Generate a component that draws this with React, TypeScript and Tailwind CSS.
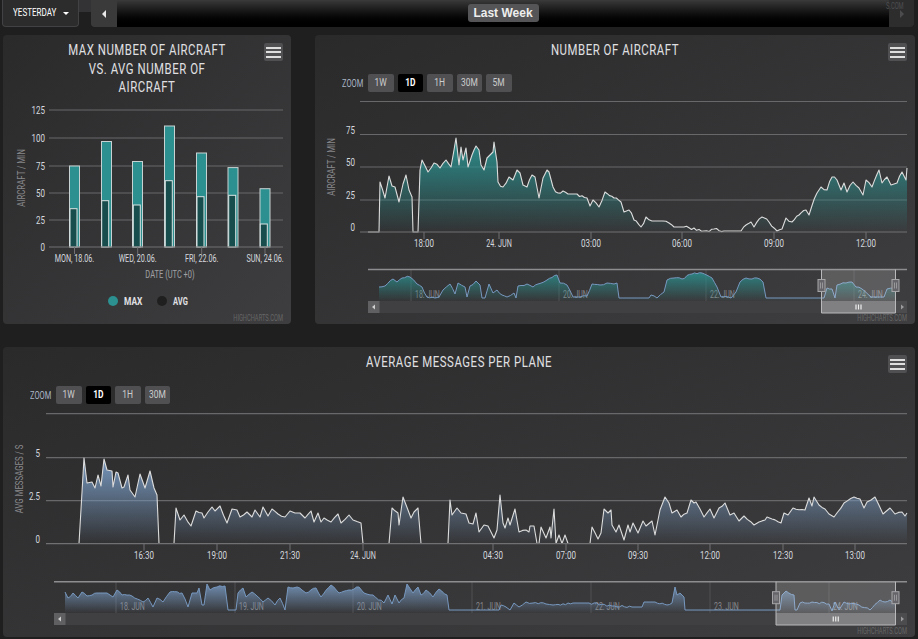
import type { ReactNode } from 'react'

const unica = "font-['Roboto',sans-serif] uppercase"
const titleClass =
  "font-['Roboto',sans-serif] text-[15px] leading-[18.5px] tracking-[0.7px] uppercase text-[#e0e0e3] text-center scale-x-[0.76]"

type Pts = number[]

// wiggle long segments a bit so the series reads like real samples
function jag(flat: Pts, amp: number, step: number, seed: number) {
  const out: string[] = []
  let n = seed
  for (let i = 0; i < flat.length; i += 2) {
    const x = flat[i]
    const y = flat[i + 1]
    out.push(`${x},${y}`)
    if (i + 2 >= flat.length) break
    const nx = flat[i + 2]
    const ny = flat[i + 3]
    if (ny === y || nx - x < step * 1.5) continue
    const parts = Math.floor((nx - x) / step)
    for (let k = 1; k < parts; k++) {
      n += 1
      const r = Math.sin(n * 12.9898) * 43758.5453
      const noise = (r - Math.floor(r) - 0.5) * 2 * amp
      out.push(`${(x + ((nx - x) * k) / parts).toFixed(1)},${(y + ((ny - y) * k) / parts + noise).toFixed(1)}`)
    }
  }
  return out.join(' ')
}

const aircraftLine: Pts = [
  368,232, 379,232, 380,182, 385,198, 389,176, 392,186, 395,187, 399,202, 403,184, 406,175, 409,190, 412,197, 413,232, 418,232,
  420,170, 422,160, 428,172, 434,163, 440,168, 446,160, 451,167, 454,150, 456,138, 459,165, 461,147, 463,160, 466,148, 468,167,
  472,155, 474,150, 476,146, 479,150, 481,165, 484,170, 487,158, 490,155, 493,152, 494,142, 497,162, 498,182, 503,187, 509,177,
  513,180, 517,170, 520,173, 523,185, 527,187, 532,175, 535,177, 539,198, 543,178, 547,170, 549,172, 553,187, 558,193, 563,191,
  568,194, 577,194, 587,198, 590,206, 593,200, 599,207, 605,192, 614,198, 621,202, 624,212, 629,210, 634,220, 641,227, 646,217,
  652,221, 657,221, 663,221, 669,223, 674,227, 684,227, 694,228, 704,231, 714,229, 724,231, 741,231, 746,225, 751,222, 754,227,
  762,217, 769,222, 777,231, 782,229, 786,218, 792,222, 799,215, 806,210, 809,215, 817,193, 821,187, 827,190, 832,177, 837,180,
  841,190, 844,183, 847,192, 853,182, 859,188, 863,195, 866,180, 872,187, 879,170, 882,183, 887,177, 891,185, 897,183, 902,172,
  906,180, 907,168,
]

const aircraftNav: Pts = [
  379,287, 385,286, 393,279, 397,282, 402,278, 410,277, 417,284, 422,287, 427,297, 435,298, 439,297, 443,290, 450,284, 455,294,
  458,283, 465,287, 467,297, 470,286, 476,281, 480,285, 482,298, 485,298, 489,284, 493,293, 497,290, 502,295, 507,297, 514,293,
  516,298, 518,286, 527,284, 533,287, 538,284, 547,280, 557,275, 560,283, 567,285, 573,297, 580,297, 587,296, 592,284, 600,285,
  607,283, 614,284, 617,283, 619,298, 649,298, 651,295, 657,298, 664,292, 667,280, 674,278, 682,279, 692,274, 702,273, 712,278,
  717,287, 721,297, 731,298, 736,292, 740,282, 746,278, 752,279, 757,278, 763,282, 766,298, 824,298, 827,288, 832,289, 835,298,
  837,285, 846,283, 852,282, 856,287, 862,289, 871,297, 884,297, 887,289, 894,288, 896,287,
]

const messagesLine: Pts = [
  54,543.5, 79,543.5, 84,458, 87,483, 92,482, 95,488, 98,475, 101,486, 104,459, 107,470, 112,471, 113,487, 116,472, 118,473,
  122,488, 124,487, 128,475, 130,490, 135,497, 140,474, 145,488, 150,471, 154,488, 157,495, 159,543.5, 174,543.5, 176,508, 180,520,
  184,515, 191,526, 196,511, 202,513, 204,518, 212,507, 215,511, 220,506, 227,523, 232,509, 237,510, 240,517, 247,512, 252,517,
  255,510, 260,517, 263,507, 268,516, 272,509, 278,514, 285,517, 290,511, 295,513, 300,513, 305,518, 311,511, 314,522, 318,513,
  321,522, 324,518, 331,522, 338,514, 341,523, 349,515, 353,520, 361,523, 363,543.5, 389,543.5, 392,508, 398,513, 399,525, 403,497,
  408,510, 411,518, 414,512, 418,508, 421,543.5, 448,543.5, 450,500, 452,515, 457,508, 461,513, 466,514, 469,523, 473,524, 476,513,
  479,532, 484,525, 488,526, 494,538, 497,530, 500,495, 503,523, 505,528, 508,518, 510,525, 515,509, 519,532, 526,530, 529,532,
  530,526, 534,526, 537,543.5, 539,543.5, 541,527, 546,538, 550,527, 551,538, 554,509, 556,543.5, 559,535, 562,543.5, 565,535, 568,543.5,
  590,543.5, 592,527, 598,539, 601,533, 604,509, 608,513, 611,510, 612,525, 616,532, 619,525, 624,540, 628,525, 630,532, 633,523,
  638,533, 643,521, 646,526, 652,521, 655,535, 660,510, 665,497, 669,503, 672,513, 677,510, 681,517, 687,513, 691,500, 694,503,
  696,502, 704,517, 710,509, 714,518, 719,508, 725,503, 730,515, 734,513, 739,521, 744,516, 754,525, 759,522, 765,520, 767,517,
  772,519, 781,523, 784,513, 788,515, 793,508, 805,510, 809,498, 812,506, 814,497, 819,505, 825,509, 829,514, 834,517, 844,503,
  854,497, 860,499, 864,508, 867,502, 875,497, 883,514, 890,508, 895,514, 902,512, 905,516, 907,513,
]

const messagesNav: Pts = [
  65,592, 68,598, 73,593, 78,598, 82,592, 87,596, 97,593, 107,593, 113,597, 117,590, 122,595, 132,596, 143,602, 148,598, 153,607,
  157,598, 163,602, 170,592, 182,593, 188,607, 192,593, 197,593, 199,588, 202,605, 204,605, 207,584, 210,590, 217,587, 225,586,
  228,610, 236,610, 238,593, 243,588, 246,597, 252,592, 257,596, 263,602, 268,598, 275,605, 280,598, 285,610, 288,587, 293,588,
  297,587, 302,590, 306,593, 316,588, 321,597, 331,585, 339,593, 349,590, 359,587, 364,593, 373,595, 384,603, 388,595, 392,604,
  395,595, 399,603, 404,598, 407,584, 413,593, 418,587, 421,595, 426,590, 433,597, 439,589, 447,595, 449,610, 499,610, 501,605,
  506,607, 510,610, 514,603, 519,607, 526,602, 533,603, 546,604, 553,605, 573,603, 589,603, 612,606, 632,607, 642,607, 644,602,
  655,602, 667,605, 672,603, 675,587, 677,595, 680,593, 684,597, 685,610, 780,610, 782,595, 786,591, 794,595, 795,610, 797,610,
  800,603, 812,602, 829,604, 832,611, 835,602, 839,610, 844,602, 859,605, 870,610, 880,600, 885,602, 890,600, 895,604,
]

// Squeezes Roboto horizontally, the chart font is a lot narrower
function Label({
  x,
  y,
  k = 0.8,
  anchor = 'middle',
  rotate = false,
  className,
  children,
}: {
  x: number
  y: number
  k?: number
  anchor?: 'start' | 'middle' | 'end'
  rotate?: boolean
  className: string
  children: ReactNode
}) {
  return (
    <text
      transform={`translate(${x} ${y})${rotate ? ' rotate(-90)' : ''} scale(${k} 1)`}
      textAnchor={anchor}
      className={`${unica} ${className}`}
    >
      {children}
    </text>
  )
}

function Hamburger() {
  return (
    <div className="absolute top-[8px] right-[8px] w-[19px] h-[18px] rounded-[2px] bg-[#505053] flex flex-col items-center justify-center gap-[2.5px]">
      <span className="block w-[15px] h-[2px] bg-[#dedede]" />
      <span className="block w-[15px] h-[2px] bg-[#dedede]" />
      <span className="block w-[15px] h-[2px] bg-[#dedede]" />
    </div>
  )
}

function ZoomRow({ labels }: { labels: string[] }) {
  return (
    <div className="flex items-center h-[18px] pl-[27px]">
      <span className={`${unica} w-[21px] mr-[5px] text-[10px] text-[#a9b4c4] whitespace-nowrap origin-left scale-x-[0.75]`}>Zoom</span>
      <div className="flex gap-[4px]">
        {labels.map((label) => (
          <div
            key={label}
            className={`w-[25.5px] h-[18px] rounded-[2px] flex items-center justify-center ${
              label === '1D' ? 'bg-black text-white font-bold' : 'bg-[#505053] text-[#cccccc]'
            }`}
          >
            <span className={`${unica} text-[10.5px] scale-x-[0.8]`}>{label}</span>
          </div>
        ))}
      </div>
    </div>
  )
}

function Grid({ x1, x2, ys }: { x1: number; x2: number; ys: number[] }) {
  return (
    <>
      {ys.map((y) => (
        <line key={y} x1={x1} x2={x2} y1={y} y2={y} stroke="#68686b" strokeWidth={1.2} />
      ))}
    </>
  )
}

function AxisY({ x, labels }: { x: number; labels: [string, number][] }) {
  return (
    <>
      {labels.map(([t, y]) => (
        <Label key={t} x={x} y={y} anchor="end" className="text-[10px] fill-[#d5d8de]">
          {t}
        </Label>
      ))}
    </>
  )
}

function AxisX({ ticks, y0, labelY }: { ticks: [string, number][]; y0: number; labelY: number }) {
  return (
    <>
      {ticks.map(([t, x]) => (
        <g key={t}>
          <line x1={x} x2={x} y1={y0} y2={y0 + 7} stroke="#707073" />
          <Label x={x} y={labelY} k={/[a-z]/i.test(t) ? 0.72 : 0.8} className="text-[10px] fill-[#d5d8de]">
            {t}
          </Label>
        </g>
      ))}
    </>
  )
}

function Navigator({
  left,
  right,
  top,
  plotBottom,
  selFrom,
  days,
  line,
  areaStart,
  gradient,
  seed,
}: {
  left: number
  right: number
  top: number
  plotBottom: number
  selFrom: number
  days: [string, number][]
  line: Pts
  areaStart: number
  gradient: string
  seed: number
}) {
  const pts = jag(line, 1, 2.4, seed)
  const lastX = line[line.length - 2]
  const barBottom = plotBottom + 12
  const selTo = right - 11.5
  const thumb = (selFrom + selTo) / 2
  const midY = top + 16
  return (
    <g>
      {days.map(([t, x]) => (
        <g key={t}>
          <line x1={x} x2={x} y1={top} y2={plotBottom} stroke="#505053" />
          <Label x={x + 4} y={plotBottom - 3.5} k={0.7} anchor="start" className="text-[10px] fill-[#88888b]">
            {t}
          </Label>
        </g>
      ))}
      <polygon points={`${areaStart},${plotBottom} ${pts} ${lastX},${plotBottom}`} fill={gradient} />
      <polyline points={pts} fill="none" stroke="#7798bf" strokeWidth={1} />
      <line x1={left} x2={right} y1={top} y2={top} stroke="#8d8d90" strokeWidth={1.4} />
      <rect x={left} y={plotBottom} width={right - left} height={12} fill="#404043" />
      <rect x={left} y={plotBottom} width={11.5} height={12} fill="#606063" />
      <path d={`M${left + 7} ${plotBottom + 3.5}v5l-3 -2.5z`} fill="#cfcfcf" />
      <rect x={right - 11} y={plotBottom} width={11} height={12} fill="#4c4c4f" />
      <path d={`M${right - 6} ${plotBottom + 3.5}v5l3 -2.5z`} fill="#9a9a9d" />
      <rect x={selFrom} y={top} width={selTo - selFrom} height={barBottom - top} fill="#ffffff" fillOpacity={0.17} />
      <rect x={selFrom} y={plotBottom} width={selTo - selFrom} height={12} fill="#808083" />
      <path d={`M${selFrom} ${top}V${barBottom}H${selTo}V${top}`} fill="none" stroke="#b9b9bb" strokeWidth={1} />
      {[selFrom, selTo].map((x) => (
        <g key={x}>
          <rect x={x - 3.5} y={midY - 6} width={7} height={12} fill="#66666a" stroke="#a5a5a8" />
          <path d={`M${x - 1} ${midY - 3}v6M${x + 1} ${midY - 3}v6`} stroke="#a5a5a8" strokeWidth={0.8} />
        </g>
      ))}
      <path
        d={`M${thumb - 2.5} ${plotBottom + 3.5}v5M${thumb} ${plotBottom + 3.5}v5M${thumb + 2.5} ${plotBottom + 3.5}v5`}
        stroke="#efefef"
        strokeWidth={1.2}
      />
    </g>
  )
}

function Credits({ x, y }: { x: number; y: number }) {
  return (
    <Label x={x} y={y} k={0.64} anchor="end" className="text-[9px] fill-[#666666]">
      Highcharts.com
    </Label>
  )
}

const bars = [
  [69.5, 166, 70, 208.7],
  [101.5, 141.5, 101.7, 200.7],
  [132.5, 161.5, 133.3, 205],
  [164.5, 126, 165.3, 180.7],
  [196.5, 153, 197, 196.7],
  [228, 167.6, 228.7, 195.3],
  [260, 188.7, 260.3, 224],
]

function ColumnChart() {
  return (
    <svg viewBox="3 98 288 226" className="block w-[288px] h-[226px]">
      <Grid x1={49} x2={283} ys={[110, 138, 166, 193, 220]} />
      <AxisY x={45} labels={[['125', 114], ['100', 142], ['75', 170], ['50', 197], ['25', 224], ['0', 251]]} />
      <Label x={25} y={178} k={0.68} rotate className="text-[11.5px] fill-[#88888b]">
        aircraft / min
      </Label>
      {bars.map(([mx, my, ax, ay]) => (
        <g key={mx}>
          <rect x={mx} y={my} width={10} height={247 - my} fill="#2b908f" stroke="#c9d2d2" />
          <rect x={ax} y={ay} width={7} height={247 - ay} fill="#174d4c" stroke="#dce4e4" />
        </g>
      ))}
      <line x1={49} x2={283} y1={247} y2={247} stroke="#707073" strokeWidth={1.2} />
      <AxisX
        ticks={[['Mon, 18.06.', 74.5], ['Wed, 20.06.', 137.7], ['Fri, 22.06.', 201.7], ['Sun, 24.06.', 265]]}
        y0={247}
        labelY={262}
      />
      <Label x={170} y={278} k={0.68} className="text-[11px] fill-[#a0a0a3]">
        Date (UTC +0)
      </Label>
      <circle cx={113} cy={301} r={5} fill="#2b908f" />
      <Label x={124} y={305} k={0.8} anchor="start" className="text-[10.5px] font-bold fill-[#e0e0e3]">
        Max
      </Label>
      <circle cx={162} cy={301} r={5} fill="#1f1f1f" />
      <Label x={173} y={305} k={0.72} anchor="start" className="text-[10.5px] font-bold fill-[#e0e0e3]">
        AVG
      </Label>
      <Credits x={283} y={321} />
    </svg>
  )
}

function AircraftChart() {
  const pts = jag(aircraftLine, 1.8, 2.2, 3)
  return (
    <svg viewBox="315 96 600 228" className="block w-[600px] h-[228px]">
      <defs>
        <linearGradient id="tealMain" x1="0" y1="0" x2="0" y2="1">
          <stop offset="0" stopColor="#2b908f" />
          <stop offset="1" stopColor="#2b908f" stopOpacity={0} />
        </linearGradient>
        <linearGradient id="tealNav" x1="0" y1="0" x2="0" y2="1">
          <stop offset="0" stopColor="#2b908f" stopOpacity={0.85} />
          <stop offset="1" stopColor="#2b908f" stopOpacity={0} />
        </linearGradient>
      </defs>
      <Grid x1={360} x2={907} ys={[101.5, 134.5, 167, 200]} />
      <AxisY x={355} labels={[['75', 133.5], ['50', 166], ['25', 199], ['0', 231]]} />
      <Label x={335} y={167} k={0.68} rotate className="text-[11.5px] fill-[#88888b]">
        aircraft / min
      </Label>
      <polygon points={`368,232 ${pts} 907,232`} fill="url(#tealMain)" />
      <polyline points={pts} fill="none" stroke="#dcdcdc" strokeWidth={1.1} strokeLinejoin="round" />
      <line x1={360} x2={907} y1={232} y2={232} stroke="#707073" strokeWidth={1.2} />
      <AxisX
        ticks={[['18:00', 424], ['24. Jun', 499], ['03:00', 591], ['06:00', 682], ['09:00', 774], ['12:00', 866]]}
        y0={232}
        labelY={247}
      />
      <Navigator
        left={368}
        right={907}
        top={269.5}
        plotBottom={301}
        selFrom={821.5}
        days={[['18. Jun', 411], ['20. Jun', 559], ['22. Jun', 706], ['24. Jun', 854]]}
        line={aircraftNav}
        areaStart={379}
        gradient="url(#tealNav)"
        seed={21}
      />
      <Credits x={907} y={321} />
    </svg>
  )
}

function MessagesChart() {
  const pts = jag(messagesLine, 0.8, 3, 9)
  return (
    <svg viewBox="3 408 912 229" className="block w-[912px] h-[229px]">
      <defs>
        <linearGradient id="blueMain" x1="0" y1="0" x2="0" y2="1">
          <stop offset="0" stopColor="#7798bf" />
          <stop offset="1" stopColor="#7798bf" stopOpacity={0} />
        </linearGradient>
        <linearGradient id="blueNav" x1="0" y1="0" x2="0" y2="1">
          <stop offset="0" stopColor="#7798bf" stopOpacity={0.9} />
          <stop offset="1" stopColor="#7798bf" stopOpacity={0} />
        </linearGradient>
      </defs>
      <Grid x1={46} x2={907} ys={[413.7, 457.7, 500.7]} />
      <AxisY x={40} labels={[['5', 457], ['2.5', 500], ['0', 543]]} />
      <Label x={23} y={479} k={0.68} rotate className="text-[11.5px] fill-[#88888b]">
        Avg Messages / s
      </Label>
      <polygon points={`54,543.5 ${pts} 907,543.5`} fill="url(#blueMain)" />
      <polyline points={pts} fill="none" stroke="#dcdcdc" strokeWidth={1.1} strokeLinejoin="round" />
      <line x1={46} x2={907} y1={543.7} y2={543.7} stroke="#707073" strokeWidth={1.2} />
      <AxisX
        ticks={[
          ['16:30', 144],
          ['19:00', 217],
          ['21:30', 290],
          ['24. Jun', 363],
          ['04:30', 493],
          ['07:00', 566],
          ['09:30', 638],
          ['12:00', 710],
          ['12:30', 783],
          ['13:00', 855],
        ]}
        y0={543.7}
        labelY={559}
      />
      <Navigator
        left={54}
        right={907}
        top={581.7}
        plotBottom={613}
        selFrom={776}
        days={[
          ['18. Jun', 116],
          ['19. Jun', 235],
          ['20. Jun', 353],
          ['21. Jun', 472],
          ['22. Jun', 591],
          ['23. Jun', 710],
          ['24. Jun', 829],
        ]}
        line={messagesNav}
        areaStart={65}
        gradient="url(#blueNav)"
        seed={40}
      />
      <Credits x={907} y={634} />
    </svg>
  )
}

export default function App() {
  const panel = 'relative rounded-[4px] bg-linear-to-br from-[#2a2a2b] to-[#3e3e40] overflow-hidden'
  return (
    <div className="w-[918px] h-[639px] overflow-hidden bg-[#1f1f1f] flex flex-col">
      {/* Date nav */}
      <div className="flex h-[27px] pl-[2px] pr-[4px] shrink-0">
        <div className="w-[77px] h-[27px] rounded-b-[4px] bg-[#2c2c2c] border border-t-0 border-[#424244] flex items-center pl-[10px] gap-[3px]">
          <span className={`${unica} w-[47px] text-[11.5px] text-white whitespace-nowrap origin-left scale-x-[0.7]`}>Yesterday</span>
          <span className="w-0 h-0 border-x-[3px] border-x-transparent border-t-[3px] border-t-white" />
        </div>
        <div className="w-[12px] h-[12px] bg-[#333335]" />
        <div className="flex-1 flex rounded-b-[3px] overflow-hidden bg-linear-to-b from-[#3a3a3a] to-black">
          <div className="w-[26px] h-full bg-[#3a3a3b] flex items-center justify-center">
            <span className="w-0 h-0 border-y-[4px] border-y-transparent border-r-[4px] border-r-[#e8e8e8]" />
          </div>
          <div className="flex-1 flex justify-center pt-[4px]">
            <div className="w-[71px] h-[18px] rounded-[3px] bg-[#555557] flex items-center justify-center font-['Liberation_Sans',sans-serif] text-[12px] leading-none font-bold text-[#eeeeee]">
              Last Week
            </div>
          </div>
          <div className="relative w-[25px] h-full bg-[#2d2d2e] flex items-center justify-center">
            <span className={`${unica} absolute top-[0px] right-[5px] text-[9px] text-[#4e4e50] scale-x-[0.64]`}>s.com</span>
            <span className="w-0 h-0 border-y-[4px] border-y-transparent border-l-[4px] border-l-[#4c4c4e]" />
          </div>
        </div>
      </div>

      {/* Top row */}
      <div className="flex gap-[24px] pl-[3px] mt-[8px] h-[289px] shrink-0">
        <div className={`${panel} w-[288px]`}>
          <div className={`${titleClass} pt-[6px] h-[63px]`}>
            Max number of aircraft
            <br />
            vs. Avg number of
            <br />
            aircraft
          </div>
          <Hamburger />
          <ColumnChart />
        </div>
        <div className={`${panel} w-[600px]`}>
          <div className={`${titleClass} pt-[6px] h-[39px]`}>Number of aircraft</div>
          <Hamburger />
          <ZoomRow labels={['1W', '1D', '1H', '30m', '5m']} />
          <div className="h-[4px]" />
          <AircraftChart />
        </div>
      </div>

      {/* Bottom panel */}
      <div className="pl-[3px] mt-[23px] shrink-0">
        <div className={`${panel} w-[912px] h-[290px]`}>
          <div className={`${titleClass} pt-[6px] h-[39px]`}>Average messages per plane</div>
          <Hamburger />
          <ZoomRow labels={['1W', '1D', '1H', '30m']} />
          <div className="h-[4px]" />
          <MessagesChart />
        </div>
      </div>
    </div>
  )
}
